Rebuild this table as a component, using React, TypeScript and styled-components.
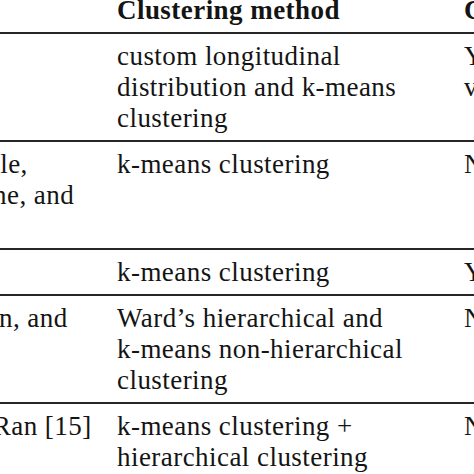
import styled, { createGlobalStyle } from 'styled-components';

const GlobalStyle = createGlobalStyle`
  html, body {
    margin: 0;
    padding: 0;
    background: #ffffff;
    overflow: hidden;
  }
  body {
    width: 474px;
    height: 474px;
  }
`;

const COLUMNS = '360px 347px 200px';

const Table = styled.div`
  display: flex;
  flex-direction: column;
  width: 907px;
  margin-left: -255px;
  margin-top: -12px;
  font-family: 'Liberation Serif', 'Times New Roman', serif;
  font-size: 27px;
  letter-spacing: 0.45px;
  line-height: 31px;
  color: #141414;
`;

interface RowProps {
  header?: boolean;
}

const Row = styled.div<RowProps>`
  display: grid;
  grid-template-columns: ${COLUMNS};
  border-bottom: 2px solid #262626;
  font-weight: ${(props) => (props.header ? 'bold' : 'normal')};
`;

const Cell = styled.div`
  padding: 7px 12px 6px;
  overflow: hidden;
`;

const Line = styled.span`
  display: block;
  white-space: nowrap;
`;

interface RowData {
  source: string[];
  method: string[];
  flag: string[];
}

const HEADER: RowData = {
  source: ['Study'],
  method: ['Clustering method'],
  flag: ['Calibrated'],
};

const ROWS: RowData[] = [
  {
    source: ['Liu et al. [11]'],
    method: ['custom longitudinal', 'distribution and k-means', 'clustering'],
    flag: ['Yes, with', 'validation'],
  },
  {
    source: ['Smith, Dooley, Carlisle,', 'Whitman, Lee, Browne, and', 'Hart [12]'],
    method: ['k-means clustering'],
    flag: ['No'],
  },
  {
    source: ['Kim [13]'],
    method: ['k-means clustering'],
    flag: ['Yes'],
  },
  {
    source: ['Johnson, Peterson, Lin, and', 'Park [14]'],
    method: ["Ward\u2019s hierarchical and", 'k-means non-hierarchical', 'clustering'],
    flag: ['No'],
  },
  {
    source: ['Zhuang, Huang, and Ran [15]'],
    method: ['k-means clustering +', 'hierarchical clustering'],
    flag: ['No'],
  },
];

const renderLines = (lines: string[]) => lines.map((l) => <Line key={l}>{l}</Line>);

const TableRow = ({ data, header }: { data: RowData; header?: boolean }) => (
  <Row header={header}>
    <Cell>{renderLines(data.source)}</Cell>
    <Cell>{renderLines(data.method)}</Cell>
    <Cell>{renderLines(data.flag)}</Cell>
  </Row>
);

export default function App() {
  return (
    <>
      <GlobalStyle />
      <Table>
        <TableRow data={HEADER} header />
        {ROWS.map((r) => <TableRow key={r.method.join(' ') + r.source[0]} data={r} />)}
      </Table>
    </>
  );
}
